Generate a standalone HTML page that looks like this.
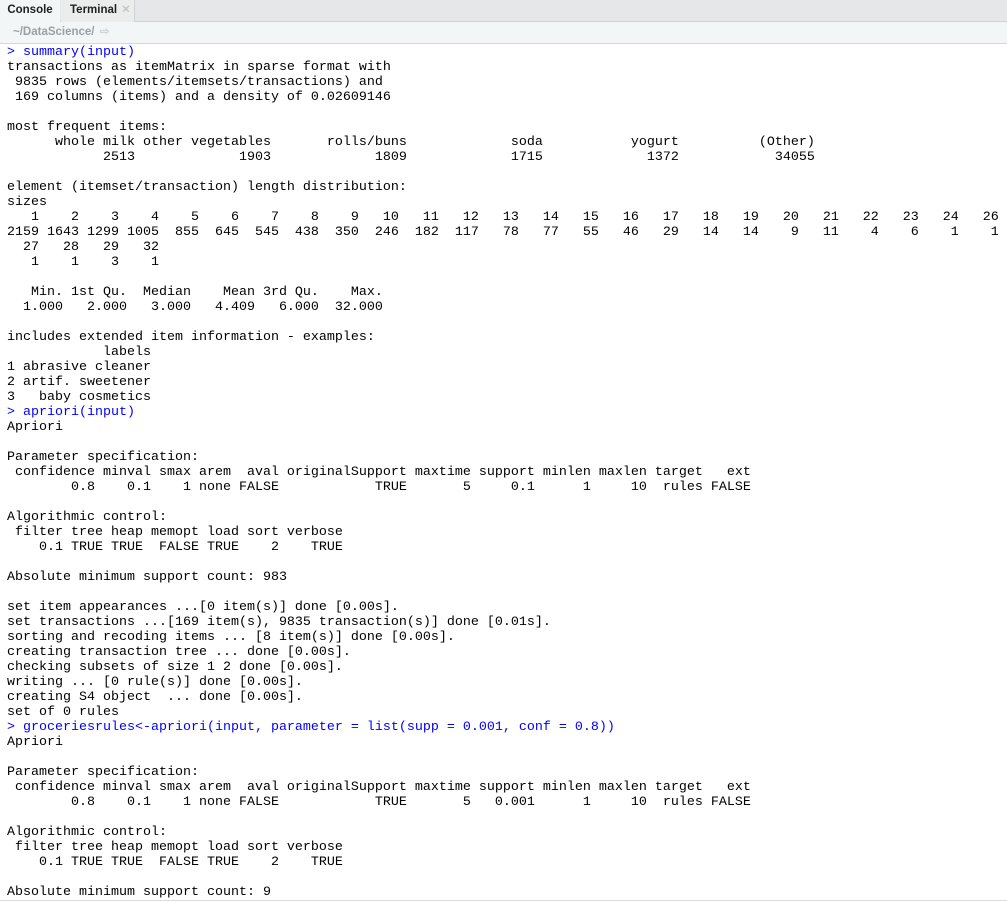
<!DOCTYPE html>
<html><head><meta charset="utf-8"><style>
html,body{margin:0;padding:0;width:1007px;height:904px;overflow:hidden;background:#fff;}
.tabs{position:absolute;left:0;top:0;width:1007px;height:21px;background:#e6e7e8;border-bottom:1px solid #d0d3d4;font-family:"Liberation Sans",sans-serif;font-size:11.5px;font-weight:bold;color:#222;}
.tab{position:absolute;top:0;height:22px;line-height:21px;}
.t1{left:0;width:60px;background:#f2f6f6;text-align:center;}
.t2{left:61px;width:74px;background:#ebecec;border-right:1px solid #d0d3d4;text-align:left;padding-left:9px;box-sizing:border-box;}
.t2 span{color:#bbb;font-weight:normal;margin-left:4px;}
.path{position:absolute;left:0;top:22px;width:1007px;height:21px;background:#f2f6f6;border-bottom:1px solid #d3d6d6;font-family:"Liberation Sans",sans-serif;font-size:11.5px;font-weight:bold;color:#9aa0a3;line-height:21px;}
.path span{padding-left:13px;}
pre{position:absolute;left:7px;top:45px;margin:0;font-family:"Liberation Mono",monospace;font-size:13.33px;line-height:15px;color:#000;}
.c{color:#0000ff;}
.bot{position:absolute;left:0;top:900px;width:1007px;height:1px;background:#d8dadb;}
</style></head><body>
<div class="tabs"><div class="tab t1">Console</div><div class="tab t2">Terminal<span>✕</span></div></div>
<div class="path"><span>~/DataScience/ <span style="padding-left:2px;color:#cfd3d4">⇨</span></span></div>
<pre><span class="c">&gt; summary(input)</span>
transactions as itemMatrix in sparse format with
 9835 rows (elements/itemsets/transactions) and
 169 columns (items) and a density of 0.02609146 

most frequent items:
      whole milk other vegetables       rolls/buns             soda           yogurt          (Other) 
            2513             1903             1809             1715             1372            34055 

element (itemset/transaction) length distribution:
sizes
   1    2    3    4    5    6    7    8    9   10   11   12   13   14   15   16   17   18   19   20   21   22   23   24   26 
2159 1643 1299 1005  855  645  545  438  350  246  182  117   78   77   55   46   29   14   14    9   11    4    6    1    1 
  27   28   29   32 
   1    1    3    1 

   Min. 1st Qu.  Median    Mean 3rd Qu.    Max. 
  1.000   2.000   3.000   4.409   6.000  32.000 

includes extended item information - examples:
            labels
1 abrasive cleaner
2 artif. sweetener
3   baby cosmetics
<span class="c">&gt; apriori(input)</span>
Apriori

Parameter specification:
 confidence minval smax arem  aval originalSupport maxtime support minlen maxlen target   ext
        0.8    0.1    1 none FALSE            TRUE       5     0.1      1     10  rules FALSE

Algorithmic control:
 filter tree heap memopt load sort verbose
    0.1 TRUE TRUE  FALSE TRUE    2    TRUE

Absolute minimum support count: 983 

set item appearances ...[0 item(s)] done [0.00s].
set transactions ...[169 item(s), 9835 transaction(s)] done [0.01s].
sorting and recoding items ... [8 item(s)] done [0.00s].
creating transaction tree ... done [0.00s].
checking subsets of size 1 2 done [0.00s].
writing ... [0 rule(s)] done [0.00s].
creating S4 object  ... done [0.00s].
set of 0 rules 
<span class="c">&gt; groceriesrules&lt;-apriori(input, parameter = list(supp = 0.001, conf = 0.8))</span>
Apriori

Parameter specification:
 confidence minval smax arem  aval originalSupport maxtime support minlen maxlen target   ext
        0.8    0.1    1 none FALSE            TRUE       5   0.001      1     10  rules FALSE

Algorithmic control:
 filter tree heap memopt load sort verbose
    0.1 TRUE TRUE  FALSE TRUE    2    TRUE

Absolute minimum support count: 9 </pre>
<div class="bot"></div>
</body></html>
